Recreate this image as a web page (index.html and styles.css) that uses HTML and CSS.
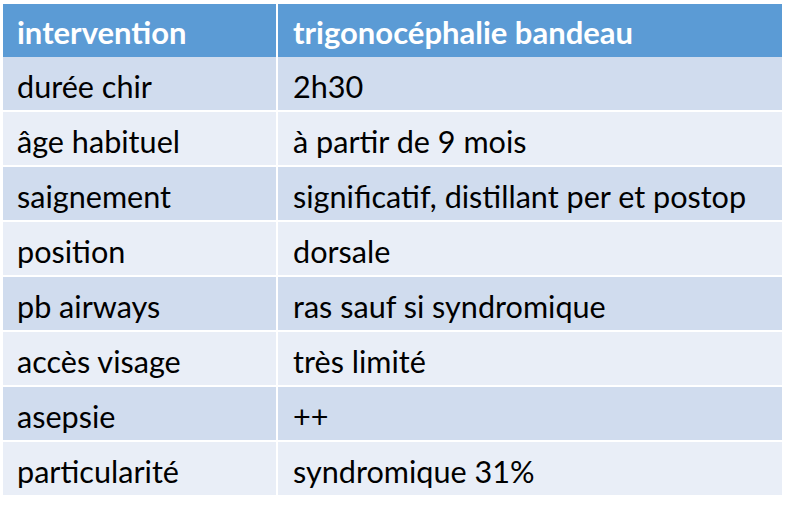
FILE: index.html
```html
<!DOCTYPE html>
<html lang="fr">
<head>
<meta charset="utf-8">
<link rel="stylesheet" href="styles.css">
</head>
<body>
<div class="grid">
  <div class="cell head">intervention</div>
  <div class="cell head">trigonocéphalie bandeau</div>
  <div class="cell odd">durée chir</div>
  <div class="cell odd">2h30</div>
  <div class="cell even">âge habituel</div>
  <div class="cell even">à partir de 9 mois</div>
  <div class="cell odd">saignement</div>
  <div class="cell odd">significatif, distillant per et postop</div>
  <div class="cell even">position</div>
  <div class="cell even">dorsale</div>
  <div class="cell odd">pb airways</div>
  <div class="cell odd">ras sauf si syndromique</div>
  <div class="cell even">accès visage</div>
  <div class="cell even">très limité</div>
  <div class="cell odd">asepsie</div>
  <div class="cell odd">++</div>
  <div class="cell even">particularité</div>
  <div class="cell even">syndromique 31%</div>
</div>
</body>
</html>
```
FILE: styles.css
```css
html, body {
  margin: 0;
  background: #ffffff;
}
body {
  padding: 4px 0 0 3px;
  font-family: "Lato", "Open Sans", sans-serif;
}
.grid {
  display: grid;
  grid-template-columns: 273px 504px;
  grid-template-rows: 51px repeat(8, 53px);
  column-gap: 2px;
  row-gap: 2px;
  width: 779px;
}
.cell {
  display: flex;
  align-items: center;
  padding-left: 14px;
  padding-top: 5px;
  font-size: 30.6px;
  color: #000000;
  white-space: nowrap;
}
.cell:nth-child(2n) {
  padding-left: 15px;
}
.head {
  background: #5b9bd5;
  color: #ffffff;
  font-weight: 700;
  font-size: 31px;
  padding-top: 2px;
  margin-bottom: 3px;
  height: 51px;
}
.odd {
  background: #d0dcee;
}
.even {
  background: #e9eef7;
}
```
